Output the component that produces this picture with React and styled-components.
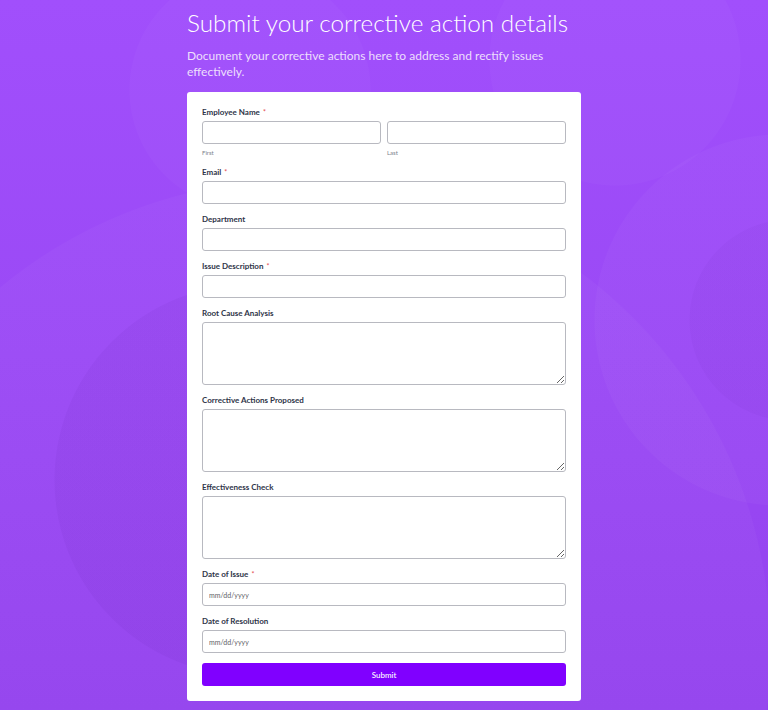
import React from "react";
import styled, { createGlobalStyle } from "styled-components";

const Global = createGlobalStyle`
  html, body { margin: 0; padding: 0; }
  body {
    font-family: Lato, "Open Sans", Arial, sans-serif;
    min-height: 710px;
    background-color: #9a4af5;
    background-image:
      radial-gradient(circle at 250px 480px, rgba(70,10,140,0.055) 0 195px, transparent 196px),
      radial-gradient(circle at 790px 320px, rgba(70,10,140,0.04) 0 100px, transparent 101px),
      radial-gradient(circle at 300px 650px, rgba(255,255,255,0.028) 0 470px, transparent 471px),
      radial-gradient(circle at 250px 90px, rgba(255,255,255,0.022) 0 120px, transparent 121px),
      radial-gradient(circle at 615px 60px, rgba(255,255,255,0.022) 0 125px, transparent 126px),
      radial-gradient(circle at 780px 320px, rgba(255,255,255,0.028) 0 185px, transparent 186px),
      linear-gradient(180deg, #a14ffc 0%, #9a49f5 50%, #9342ee 100%);
  }
`;

const Page = styled.div`
  width: 394px;
  margin: 0 auto;
  padding-top: 5px;
  padding-bottom: 9px;
`;

const Title = styled.h1`
  margin: 0;
  font-family: Lato, sans-serif;
  font-weight: 300;
  font-size: 24.3px;
  line-height: 36px;
  color: #ffffff;
  white-space: nowrap;
`;

const Subtitle = styled.p`
  margin: 7px 0 12px;
  font-size: 12px;
  line-height: 16px;
  color: #eddffd;
  font-weight: 400;
`;

const Card = styled.form`
  background: #ffffff;
  border-radius: 3px;
  padding: 15px;
  display: flex;
  flex-direction: column;
`;

const Field = styled.div`
  display: flex;
  flex-direction: column;
  margin-bottom: 10px;
`;

const Label = styled.label`
  font-size: 8px;
  line-height: 10px;
  font-weight: 700;
  color: #2e3448;
  margin-bottom: 4px;
  display: flex;
  align-items: center;
  gap: 3px;
`;

const Req = styled.span`
  color: #e5484d;
  font-size: 7px;
  font-weight: 400;
`;

const Row = styled.div`
  display: grid;
  grid-template-columns: 1fr 1fr;
  column-gap: 6px;
`;

const Sub = styled.div`
  display: flex;
  flex-direction: column;
`;

const SubLabel = styled.span`
  font-size: 6px;
  line-height: 8px;
  color: #7a7e8a;
  margin-top: 5px;
`;

const Input = styled.input`
  box-sizing: border-box;
  width: 100%;
  height: 23px;
  border: 1px solid #b8b9c0;
  border-radius: 3px;
  background: #fff;
  padding: 0 6px;
  font-family: Lato, sans-serif;
  font-size: 7px;
  color: #333;
  outline: none;
  &::placeholder { color: #5f6166; }
`;

const TextArea = styled.textarea`
  box-sizing: border-box;
  width: 100%;
  height: 63px;
  border: 1px solid #b8b9c0;
  border-radius: 3px;
  background: #fff;
  padding: 6px;
  font-family: Lato, sans-serif;
  font-size: 8px;
  display: block;
  resize: vertical;
  outline: none;
`;

const Button = styled.button`
  height: 23px;
  border: none;
  border-radius: 3px;
  background: #8000ff;
  color: #ffffff;
  font-family: Lato, sans-serif;
  font-size: 8px;
  font-weight: 500;
  cursor: pointer;
`;

function F({ label, req, children }) {
  return (
    <Field>
      <Label>
        {label}
        {req && <Req>*</Req>}
      </Label>
      {children}
    </Field>
  );
}

export default function App() {
  return (
    <>
      <Global />
      <Page>
        <Title>Submit your corrective action details</Title>
        <Subtitle>
          Document your corrective actions here to address and rectify issues effectively.
        </Subtitle>
        <Card onSubmit={(e) => e.preventDefault()}>
          <F label="Employee Name" req>
            <Row>
              <Sub>
                <Input />
                <SubLabel>First</SubLabel>
              </Sub>
              <Sub>
                <Input />
                <SubLabel>Last</SubLabel>
              </Sub>
            </Row>
          </F>
          <F label="Email" req>
            <Input type="email" />
          </F>
          <F label="Department">
            <Input />
          </F>
          <F label="Issue Description" req>
            <Input />
          </F>
          <F label="Root Cause Analysis">
            <TextArea />
          </F>
          <F label="Corrective Actions Proposed">
            <TextArea />
          </F>
          <F label="Effectiveness Check">
            <TextArea />
          </F>
          <F label="Date of Issue" req>
            <Input placeholder="mm/dd/yyyy" />
          </F>
          <F label="Date of Resolution">
            <Input placeholder="mm/dd/yyyy" />
          </F>
          <Button type="submit">Submit</Button>
        </Card>
      </Page>
    </>
  );
}
